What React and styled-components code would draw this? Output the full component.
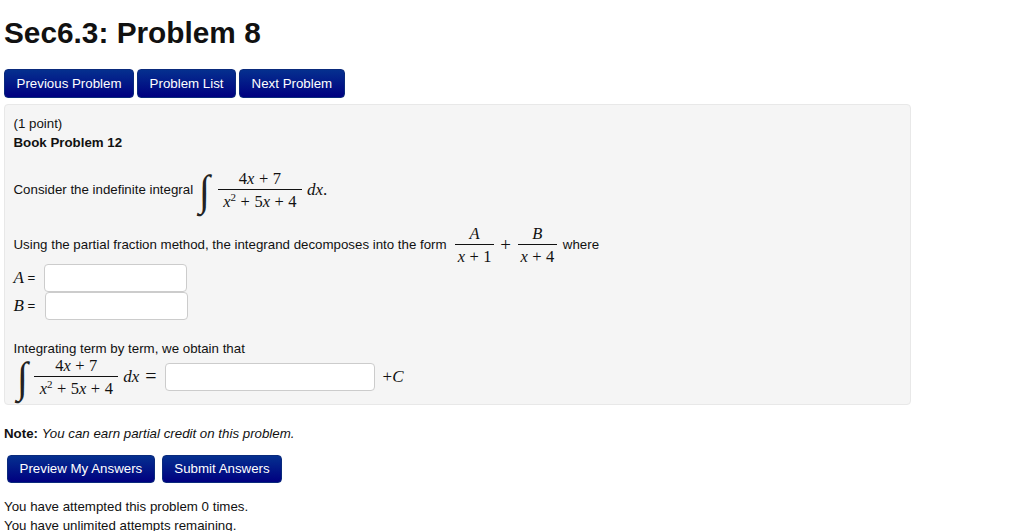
import styled, { createGlobalStyle } from "styled-components";

const Global = createGlobalStyle`
html, body {
  margin: 0;
  height: 531px;
  overflow: hidden;
  background: #fff;
}
body {
  font-family: "Liberation Sans", Arial, sans-serif;
  font-size: 13.3px;
  line-height: 19px;
  color: #111;
}
`;

const Page = styled.div`
  padding: 0 4px;
  width: 907px;
`;

const Title = styled.h1`
  margin: 0;
  padding-top: 15px;
  font-size: 29.8px;
  line-height: 36px;
  font-weight: bold;
  color: #111;
`;

const ButtonRow = styled.div`
  display: flex;
  gap: ${(p) => p.$gap || 3}px;
  margin: ${(p) => p.$margin || "0"};
  padding-left: ${(p) => p.$indent || 0}px;
`;

const Button = styled.button`
  height: 28.5px;
  padding: 0 11.55px;
  border: 1px solid #0a2a7c;
  border-radius: 4px;
  background: linear-gradient(to bottom, #05308f, #000080);
  color: #fff;
  font-family: "Liberation Sans", Arial, sans-serif;
  font-size: 13.3px;
  white-space: nowrap;
`;

const Well = styled.div`
  box-sizing: border-box;
  height: 301px;
  margin-top: 6px;
  padding: 9px 8.5px 0;
  background: #f5f5f5;
  border: 1px solid #e8e8e8;
  border-radius: 4px;
`;

const Bold = styled.div`
  font-weight: bold;
`;

const Line = styled.div`
  display: flex;
  align-items: center;
  height: ${(p) => p.$height || 19}px;
  margin-top: ${(p) => p.$top || 0}px;
  white-space: pre;
`;

const Math = styled.span`
  font-family: "Liberation Serif", "Times New Roman", serif;
  font-size: ${(p) => p.$size || 17}px;
  color: #111;
  font-style: ${(p) => (p.$italic ? "italic" : "normal")};
  margin: ${(p) => p.$margin || "0"};
`;

const Integral = styled.span`
  font-family: "Liberation Serif", serif;
  font-size: 32px;
  line-height: 40px;
  font-style: italic;
  color: #222;
  transform: scale(1.25, 1.35);
  margin: ${(p) => p.$margin || "0"};
`;

const Fraction = styled.span`
  display: inline-flex;
  flex-direction: column;
  align-items: center;
  width: ${(p) => p.$width}px;
  margin: ${(p) => p.$margin || "0"};
  font-family: "Liberation Serif", "Times New Roman", serif;
  font-size: 16.5px;
  line-height: 17px;
`;

const Numerator = styled.span`
  align-self: stretch;
  text-align: center;
  padding: 0 0 2px;
  border-bottom: 1px solid #111;
`;

const Denominator = styled.span`
  padding-top: 3px;
`;

const I = styled.i`
  font-style: italic;
`;

const Sup = styled.sup`
  font-size: 11px;
  line-height: 0;
`;

const Op = styled.span`
  margin: 0 4.5px;
`;

const Where = styled.span`
  margin-left: 6px;
`;

const Input = styled.input`
  box-sizing: border-box;
  width: ${(p) => p.$width || 143}px;
  height: 28px;
  margin: ${(p) => p.$margin || "0"};
  padding: 4px 6px;
  background: #fff;
  border: 1px solid #ccc;
  border-radius: 4px;
`;

const Note = styled.div`
  margin-top: 19px;
`;

const Em = styled.em`
  font-style: italic;
`;

const Status = styled.div`
  margin-top: 13.5px;
`;

const MainFraction = () => (
  <Fraction $width={84}>
    <Numerator>
      4<I>x</I>
      <Op>+</Op>7
    </Numerator>
    <Denominator>
      <I>x</I>
      <Sup>2</Sup>
      <Op>+</Op>5<I>x</I>
      <Op>+</Op>4
    </Denominator>
  </Fraction>
);

const App = () => (
  <Page>
    <Global />
    <Title>Sec6.3: Problem 8</Title>
    <ButtonRow $margin="18px 0 0">
      <Button>Previous Problem</Button>
      <Button>Problem List</Button>
      <Button>Next Problem</Button>
    </ButtonRow>
    <Well>
      <div>(1 point)</div>
      <Bold>Book Problem 12</Bold>
      <Line $height={40} $top={18}>
        Consider the indefinite integral
        <Integral $margin="0 9px 0 7px">∫</Integral>
        <MainFraction />
        <Math $italic $margin="0 0 0 5px">
          dx
        </Math>
        <Math>.</Math>
      </Line>
      <Line $height={40} $top={15}>
        Using the partial fraction method, the integrand decomposes into the form
        <Fraction $width={39} $margin="0 0 0 8.5px">
          <Numerator>
            <I>A</I>
          </Numerator>
          <Denominator>
            <I>x</I>
            <Op>+</Op>1
          </Denominator>
        </Fraction>
        <Math $size={19} $margin="0 7px 0 6px">
          +
        </Math>
        <Fraction $width={39}>
          <Numerator>
            <I>B</I>
          </Numerator>
          <Denominator>
            <I>x</I>
            <Op>+</Op>4
          </Denominator>
        </Fraction>
        <Where>where</Where>
      </Line>
      <Line $height={28} $top={-1}>
        <Math $italic>A</Math> = <Input $margin="0 0 0 5px" />
      </Line>
      <Line $height={28}>
        <Math $italic>B</Math> = <Input $margin="0 0 0 6px" />
      </Line>
      <Line $top={19}>Integrating term by term, we obtain that</Line>
      <Line $height={40} $top={-1}>
        <Integral $margin="0 8px 0 4px">∫</Integral>
        <MainFraction />
        <Math $italic $margin="0 0 0 5px">
          dx
        </Math>
        <Math $size={20} $margin="0 8px 0 6px">
          =
        </Math>
        <Input $width={210} />
        <Math $margin="0 0 0 8px">
          +<I>C</I>
        </Math>
      </Line>
    </Well>
    <Note>
      <b>Note:</b> <Em>You can earn partial credit on this problem.</Em>
    </Note>
    <ButtonRow $gap={7} $indent={3} $margin="12px 0 0">
      <Button>Preview My Answers</Button>
      <Button>Submit Answers</Button>
    </ButtonRow>
    <Status>
      You have attempted this problem 0 times.
      <br />
      You have unlimited attempts remaining.
    </Status>
  </Page>
);

export default App;
